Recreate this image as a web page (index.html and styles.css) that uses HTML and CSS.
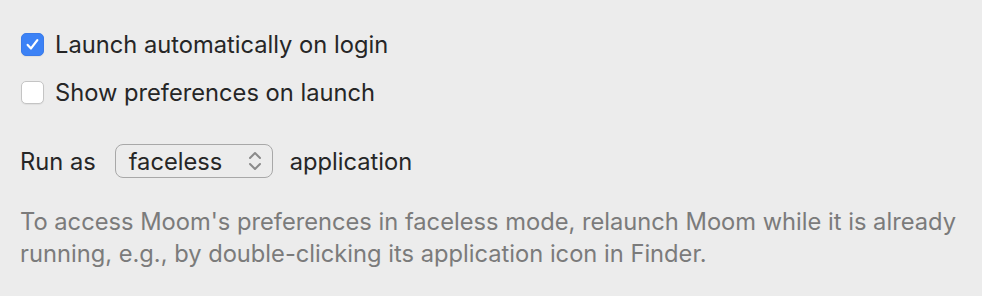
FILE: index.html
```html
<!DOCTYPE html>
<html>
<head>
<meta charset="utf-8">
<link rel="stylesheet" href="styles.css">
</head>
<body>
<div class="pane">
  <label class="check-row">
    <span class="box checked">
      <svg viewBox="0 0 24 24" width="24" height="24"><path d="M6.5 12.5 L10.3 16.5 L17.5 7" fill="none" stroke="#fff" stroke-width="2.6" stroke-linecap="round" stroke-linejoin="round"/></svg>
    </span>
    <span class="label">Launch automatically on login</span>
  </label>
  <label class="check-row">
    <span class="box"></span>
    <span class="label">Show preferences on launch</span>
  </label>
  <div class="run-row">
    <span class="label">Run as</span>
    <span class="popup">
      <span class="popup-text">faceless</span>
      <svg class="chev" viewBox="0 0 16 24" width="16" height="24"><path d="M3 9 L8 4 L13 9 M3 15 L8 20 L13 15" fill="none" stroke="#8a8a8a" stroke-width="2" stroke-linecap="round" stroke-linejoin="round"/></svg>
    </span>
    <span class="label">application</span>
  </div>
  <p class="note">To access Moom's preferences in faceless mode, relaunch Moom while it is already<br>running, e.g., by double-clicking its application icon in Finder.</p>
</div>
</body>
</html>
```

FILE: styles.css
```css
html, body {
  margin: 0;
  padding: 0;
  background: #ececec;
}
body {
  width: 982px;
  height: 296px;
  overflow: hidden;
  font-family: "Inter", "Liberation Sans", sans-serif;
  color: #262626;
}
.pane {
  padding: 30px 10px 0 20px;
  display: flex;
  flex-direction: column;
}
.check-row {
  display: flex;
  align-items: center;
  gap: 11px;
  height: 28px;
  margin-bottom: 20px;
  padding-left: 1px;
}
.label {
  font-size: 23.7px;
}
.box {
  width: 23px;
  height: 23px;
  box-sizing: border-box;
  border-radius: 5px;
  background: #fff;
  border: 1px solid #c4c4c4;
  box-shadow: 0 1px 1px rgba(0,0,0,0.06);
  display: flex;
  align-items: center;
  justify-content: center;
}
.box.checked {
  background: #3c82f6;
  border-color: #3a7bea;
}
.box svg {
  width: 23px;
  height: 23px;
}
.run-row {
  display: flex;
  align-items: center;
  margin-top: 18px;
  height: 34px;
}
.run-row .label:first-child {
  margin-right: 19px;
}
.popup {
  width: 158px;
  height: 34px;
  box-sizing: border-box;
  border: 1.5px solid #a8a8a8;
  border-radius: 8px;
  display: flex;
  align-items: center;
  justify-content: space-between;
  padding: 0 9px 0 13px;
  margin-right: 17px;
}
.popup-text {
  font-size: 23.7px;
}
.chev {
  width: 16px;
  height: 24px;
}
.note {
  margin: 28px 0 0;
  font-size: 23.7px;
  line-height: 32px;
  color: #7b7b7b;
  white-space: nowrap;
}
```
